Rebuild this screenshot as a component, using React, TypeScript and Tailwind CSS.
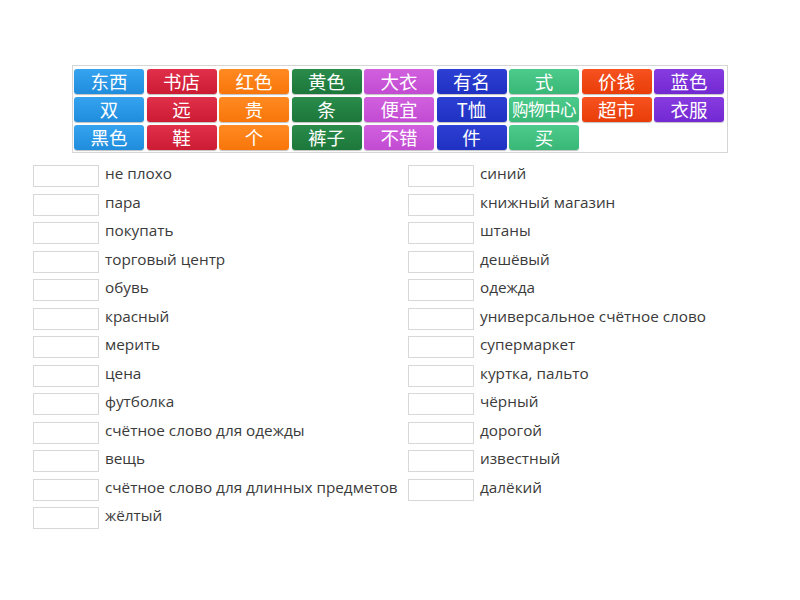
import React from "react";

const colors = [
  "bg-[linear-gradient(#35a3ef,#1f8ddc)]",
  "bg-[linear-gradient(#e0304a,#cc1c34)]",
  "bg-[linear-gradient(#ff8a22,#f8760a)]",
  "bg-[linear-gradient(#2a8c4b,#1c773a)]",
  "bg-[linear-gradient(#d160de,#c24bd2)]",
  "bg-[linear-gradient(#2d40d4,#1f31c2)]",
  "bg-[linear-gradient(#4ccb8c,#38b776)]",
  "bg-[linear-gradient(#f65220,#e83d08)]",
  "bg-[linear-gradient(#873ce0,#7329d2)]",
];

const tiles = [
  ["东西", "书店", "红色", "黄色", "大衣", "有名", "式", "价钱", "蓝色"],
  ["双", "远", "贵", "条", "便宜", "T恤", "购物中心", "超市", "衣服"],
  ["黑色", "鞋", "个", "裤子", "不错", "件", "买"],
];

const left = [
  "не плохо",
  "пара",
  "покупать",
  "торговый центр",
  "обувь",
  "красный",
  "мерить",
  "цена",
  "футболка",
  "счётное слово для одежды",
  "вещь",
  "счётное слово для длинных предметов",
  "жёлтый",
];

const right = [
  "синий",
  "книжный магазин",
  "штаны",
  "дешёвый",
  "одежда",
  "универсальное счётное слово",
  "супермаркет",
  "куртка, пальто",
  "чёрный",
  "дорогой",
  "известный",
  "далёкий",
];

function Row({ text }: { text: string }) {
  return (
    <div className="flex h-[22px] items-center">
      <div className="h-[22px] w-[66px] shrink-0 border border-[#d8d8d8] bg-white" />
      <span className="ml-[6px] -mt-[5px] whitespace-nowrap text-[15.3px] text-[#3a3a3a]">{text}</span>
    </div>
  );
}

export default function App() {
  return (
    <div className="h-[600px] w-[800px] bg-white font-['Open_Sans',sans-serif]">
      <div className="pl-[72px] pt-[65px]">
        <div className="flex w-[656px] flex-col gap-[3px] border border-[#d6d6d6] px-[1px] pb-[2px] pt-[3px]">
          {tiles.map((row, r) => (
            <div key={r} className="flex gap-[2.5px]">
              {row.map((t, c) => (
                <div
                  key={t}
                  className={`flex h-[25px] w-[70px] items-center justify-center rounded-[3px] text-white shadow-[0_1px_1px_rgba(0,0,0,0.25)] font-['Noto_Sans_CJK_SC',sans-serif] ${colors[c]} ${
                    t.length > 3 ? "text-[16.5px] tracking-[-0.5px]" : "text-[18.5px]"
                  }`}
                >
                  {t}
                </div>
              ))}
            </div>
          ))}
        </div>
      </div>
      <div className="mt-[12px] flex">
        <div className="ml-[33px] flex w-[375px] flex-col gap-[6.5px]">
          {left.map((t) => (
            <Row key={t} text={t} />
          ))}
        </div>
        <div className="flex flex-col gap-[6.5px]">
          {right.map((t) => (
            <Row key={t} text={t} />
          ))}
        </div>
      </div>
    </div>
  );
}
